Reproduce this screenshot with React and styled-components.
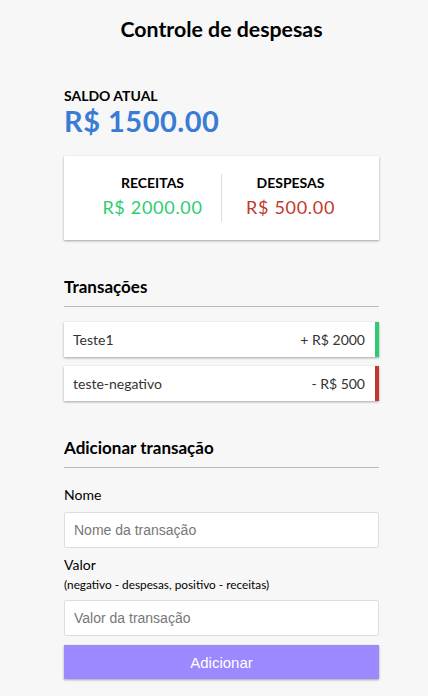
import React from "react";
import styled, { createGlobalStyle } from "styled-components";

const Global = createGlobalStyle`
  * { box-sizing: border-box; }
  html, body { margin: 0; padding: 0; background: #f7f7f7; }
  body { font-family: Lato, "Noto Sans", sans-serif; color: #000; }
`;

const Page = styled.div`
  width: 315px;
  margin-left: 64px;
  padding-top: 16px;
  padding-bottom: 17px;
`;

const Title = styled.h1`
  margin: 0;
  font-size: 21.3px;
  line-height: 27px;
  font-weight: 700;
  text-align: center;
`;

const BalanceLabel = styled.h4`
  margin: 44px 0 0;
  font-size: 14px;
  line-height: 17px;
  font-weight: 700;
  text-transform: uppercase;
`;

const Balance = styled.div`
  font-size: 29px;
  line-height: 34px;
  font-weight: 700;
  color: #3a7bd5;
  letter-spacing: 0.5px;
`;

const Card = styled.div`
  background: #fff;
  box-shadow: 0 1px 3px rgba(0, 0, 0, 0.12), 0 1px 2px rgba(0, 0, 0, 0.24);
  padding: 18px 20px;
  margin-top: 18px;
  display: flex;
`;

const Col = styled.div`
  flex: 1;
  text-align: center;
  border-right: ${(p) => (p.$divider ? "1px solid #dedede" : "none")};
`;

const ColTitle = styled.h4`
  margin: 0;
  font-size: 14px;
  line-height: 18px;
  font-weight: 700;
  text-transform: uppercase;
`;

const Money = styled.p`
  margin: 4px 0;
  font-size: 18px;
  line-height: 22px;
  letter-spacing: 0.7px;
  color: ${(p) => (p.$kind === "plus" ? "#2ecc71" : "#c0392b")};
`;

const SectionTitle = styled.h3`
  margin: ${(p) => p.$top}px 0 0;
  font-size: 17px;
  line-height: 22px;
  font-weight: 700;
  padding-bottom: 8px;
  border-bottom: 1px solid #bbb;
`;

const List = styled.ul`
  list-style: none;
  margin: 15px 0 0;
  padding: 0;
  display: flex;
  flex-direction: column;
  gap: 9px;
`;

const Item = styled.li`
  background: #fff;
  box-shadow: 0 1px 3px rgba(0, 0, 0, 0.12), 0 1px 2px rgba(0, 0, 0, 0.24);
  color: #333;
  display: flex;
  justify-content: space-between;
  align-items: center;
  height: 35px;
  padding: 0 10px 0 9px;
  font-size: 14px;
  border-right: 4px solid ${(p) => (p.$kind === "plus" ? "#2ecc71" : "#c0392b")};
`;

const Form = styled.form`
  margin: 0;
`;

const Label = styled.label`
  display: block;
  margin: ${(p) => p.$top}px 0 0;
  font-size: 14px;
  line-height: 18px;
`;

const Hint = styled.span`
  display: block;
  font-size: 11.8px;
  line-height: 15px;
  margin-top: 3px;
`;

const Input = styled.input`
  display: block;
  width: 100%;
  height: 36px;
  margin-top: ${(p) => p.$top}px;
  border: 1px solid #dedede;
  border-radius: 2px;
  background: #fff;
  padding: 0 9px;
  font-family: "Liberation Sans", Arial, sans-serif;
  font-size: 14px;
  &::placeholder { color: #777; }
`;

const Button = styled.button`
  display: block;
  width: 100%;
  height: 34px;
  margin-top: 9px;
  border: 0;
  background: #9c88ff;
  color: #fff;
  font-family: "Liberation Sans", Arial, sans-serif;
  font-size: 15px;
  box-shadow: 0 1px 3px rgba(0, 0, 0, 0.12), 0 1px 2px rgba(0, 0, 0, 0.24);
  cursor: pointer;
`;

export default function App() {
  return (
    <>
      <Global />
      <Page>
        <Title>Controle de despesas</Title>
        <BalanceLabel>Saldo atual</BalanceLabel>
        <Balance>R$ 1500.00</Balance>
        <Card>
          <Col $divider>
            <ColTitle>Receitas</ColTitle>
            <Money $kind="plus">R$ 2000.00</Money>
          </Col>
          <Col>
            <ColTitle>Despesas</ColTitle>
            <Money $kind="minus">R$ 500.00</Money>
          </Col>
        </Card>
        <SectionTitle $top={36}>Transações</SectionTitle>
        <List>
          <Item $kind="plus">
            <span>Teste1</span>
            <span>+ R$ 2000</span>
          </Item>
          <Item $kind="minus">
            <span>teste-negativo</span>
            <span>- R$ 500</span>
          </Item>
        </List>
        <SectionTitle $top={36}>Adicionar transação</SectionTitle>
        <Form onSubmit={(e) => e.preventDefault()}>
          <Label $top={18}>Nome</Label>
          <Input type="text" placeholder="Nome da transação" $top={8} />
          <Label $top={8}>
            Valor
            <Hint>(negativo - despesas, positivo - receitas)</Hint>
          </Label>
          <Input type="number" placeholder="Valor da transação" $top={8} />
          <Button type="submit">Adicionar</Button>
        </Form>
      </Page>
    </>
  );
}
